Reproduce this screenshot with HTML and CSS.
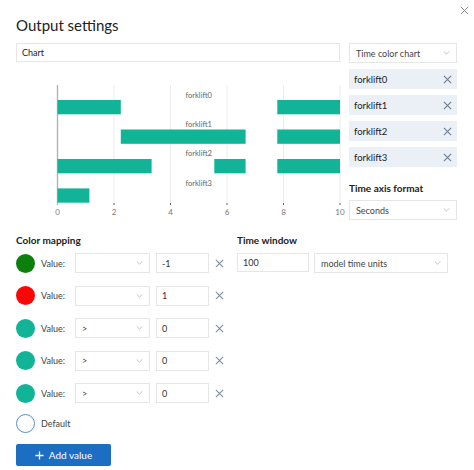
FILE: index.html
```html
<!DOCTYPE html>
<html>
<head>
<meta charset="utf-8">
<link rel="stylesheet" href="styles.css">
</head>
<body>
<div class="dialog">
  <span class="close"><svg viewBox="0 0 10 10" width="9" height="9"><path d="M1 1L9 9M9 1L1 9" stroke="#8a8a8a" stroke-width="1.1" fill="none"/></svg></span>
  <h1 class="title">Output settings</h1>
  <div class="top">
    <div class="main">
      <div class="field wide">Chart</div>
      <svg class="chart" viewBox="0 0 324 160" width="324" height="160">
        <g stroke="#ececec" stroke-width="1">
          <line x1="98" y1="23" x2="98" y2="143"/>
          <line x1="154.5" y1="23" x2="154.5" y2="143"/>
          <line x1="211" y1="23" x2="211" y2="143"/>
          <line x1="267.5" y1="23" x2="267.5" y2="143"/>
          <line x1="324" y1="23" x2="324" y2="143"/>
        </g>
        <g stroke="#666" stroke-width="1">
          <line x1="98" y1="141" x2="98" y2="143"/>
          <line x1="154.5" y1="141" x2="154.5" y2="143"/>
          <line x1="211" y1="141" x2="211" y2="143"/>
          <line x1="267.5" y1="141" x2="267.5" y2="143"/>
          <line x1="324" y1="141" x2="324" y2="143"/>
        </g>
        <line x1="41.5" y1="23" x2="41.5" y2="143" stroke="#b3b3b3" stroke-width="1.4"/>
        <g fill="#12b497">
          <rect x="41.5" y="38" width="63.3" height="14.3"/>
          <rect x="261.3" y="38" width="62.7" height="14.3"/>
          <rect x="104.8" y="67.5" width="124.8" height="14.3"/>
          <rect x="261.3" y="67.5" width="62.7" height="14.3"/>
          <rect x="41.5" y="97" width="94.1" height="14.3"/>
          <rect x="198.3" y="97" width="31.3" height="14.3"/>
          <rect x="261.3" y="97" width="62.7" height="14.3"/>
          <rect x="41.5" y="126.4" width="31.9" height="14.3"/>
        </g>
        <g class="lbl" text-anchor="middle">
          <text x="182.75" y="35.5">forklift0</text>
          <text x="182.75" y="64.5">forklift1</text>
          <text x="182.75" y="94">forklift2</text>
          <text x="182.75" y="123.5">forklift3</text>
        </g>
        <g class="tick" text-anchor="middle">
          <text x="41.5" y="153">0</text>
          <text x="98" y="153">2</text>
          <text x="154.5" y="153">4</text>
          <text x="211" y="153">6</text>
          <text x="267.5" y="153">8</text>
          <text x="324" y="153">10</text>
        </g>
      </svg>
    </div>
    <div class="side">
      <div class="select">Time color chart<svg class="chev" viewBox="0 0 8 5" width="7" height="4"><path d="M0.5 0.5L4 4L7.5 0.5" stroke="#aaa" fill="none" stroke-width="0.9"/></svg></div>
      <div class="chip">forklift0<svg class="x" viewBox="0 0 10 10" width="9" height="9"><path d="M1 1L9 9M9 1L1 9" stroke="#6f7f94" stroke-width="1.3" fill="none"/></svg></div>
      <div class="chip">forklift1<svg class="x" viewBox="0 0 10 10" width="9" height="9"><path d="M1 1L9 9M9 1L1 9" stroke="#6f7f94" stroke-width="1.3" fill="none"/></svg></div>
      <div class="chip">forklift2<svg class="x" viewBox="0 0 10 10" width="9" height="9"><path d="M1 1L9 9M9 1L1 9" stroke="#6f7f94" stroke-width="1.3" fill="none"/></svg></div>
      <div class="chip">forklift3<svg class="x" viewBox="0 0 10 10" width="9" height="9"><path d="M1 1L9 9M9 1L1 9" stroke="#6f7f94" stroke-width="1.3" fill="none"/></svg></div>
      <div class="label">Time axis format</div>
      <div class="select">Seconds<svg class="chev" viewBox="0 0 8 5" width="7" height="4"><path d="M0.5 0.5L4 4L7.5 0.5" stroke="#aaa" fill="none" stroke-width="0.9"/></svg></div>
    </div>
  </div>
  <div class="bottom">
    <div class="mapping">
      <div class="label">Color mapping</div>
      <div class="rows">
        <div class="row"><span class="dot green"></span><span class="row-label">Value:</span><div class="select op"><span></span><svg class="chev" viewBox="0 0 8 5" width="7" height="4"><path d="M0.5 0.5L4 4L7.5 0.5" stroke="#aaa" fill="none" stroke-width="0.9"/></svg></div><div class="field num">-1</div><svg class="remove" viewBox="0 0 10 10" width="9" height="9"><path d="M1 1L9 9M9 1L1 9" stroke="#7d8da2" stroke-width="1.2" fill="none"/></svg></div>
        <div class="row"><span class="dot red"></span><span class="row-label">Value:</span><div class="select op"><span></span><svg class="chev" viewBox="0 0 8 5" width="7" height="4"><path d="M0.5 0.5L4 4L7.5 0.5" stroke="#aaa" fill="none" stroke-width="0.9"/></svg></div><div class="field num">1</div><svg class="remove" viewBox="0 0 10 10" width="9" height="9"><path d="M1 1L9 9M9 1L1 9" stroke="#7d8da2" stroke-width="1.2" fill="none"/></svg></div>
        <div class="row"><span class="dot teal"></span><span class="row-label">Value:</span><div class="select op"><span>&gt;</span><svg class="chev" viewBox="0 0 8 5" width="7" height="4"><path d="M0.5 0.5L4 4L7.5 0.5" stroke="#aaa" fill="none" stroke-width="0.9"/></svg></div><div class="field num">0</div><svg class="remove" viewBox="0 0 10 10" width="9" height="9"><path d="M1 1L9 9M9 1L1 9" stroke="#7d8da2" stroke-width="1.2" fill="none"/></svg></div>
        <div class="row"><span class="dot teal"></span><span class="row-label">Value:</span><div class="select op"><span>&gt;</span><svg class="chev" viewBox="0 0 8 5" width="7" height="4"><path d="M0.5 0.5L4 4L7.5 0.5" stroke="#aaa" fill="none" stroke-width="0.9"/></svg></div><div class="field num">0</div><svg class="remove" viewBox="0 0 10 10" width="9" height="9"><path d="M1 1L9 9M9 1L1 9" stroke="#7d8da2" stroke-width="1.2" fill="none"/></svg></div>
        <div class="row"><span class="dot teal"></span><span class="row-label">Value:</span><div class="select op"><span>&gt;</span><svg class="chev" viewBox="0 0 8 5" width="7" height="4"><path d="M0.5 0.5L4 4L7.5 0.5" stroke="#aaa" fill="none" stroke-width="0.9"/></svg></div><div class="field num">0</div><svg class="remove" viewBox="0 0 10 10" width="9" height="9"><path d="M1 1L9 9M9 1L1 9" stroke="#7d8da2" stroke-width="1.2" fill="none"/></svg></div>
      </div>
      <div class="row default-row"><span class="dot empty"></span><span class="row-label">Default</span></div>
      <button class="add"><svg viewBox="0 0 10 10" width="9" height="9"><path d="M5 0.5V9.5M0.5 5H9.5" stroke="#fff" stroke-width="1.4" fill="none"/></svg>Add value</button>
    </div>
    <div class="window">
      <div class="label">Time window</div>
      <div class="tw-row">
        <div class="field tw-num">100</div>
        <div class="select tw-unit">model time units<svg class="chev" viewBox="0 0 8 5" width="7" height="4"><path d="M0.5 0.5L4 4L7.5 0.5" stroke="#aaa" fill="none" stroke-width="0.9"/></svg></div>
      </div>
    </div>
  </div>
</div>
</body>
</html>
```

FILE: styles.css
```css
* { box-sizing: border-box; }
body {
  margin: 0;
  font-family: Lato, "Open Sans", sans-serif;
  color: #333;
  background: #fff;
}
.dialog {
  position: relative;
  width: 474px;
  height: 470px;
  padding: 15px 17px 0 16px;
}
.close {
  position: absolute;
  top: 6px;
  right: 5px;
  display: flex;
}
.title {
  margin: 0;
  font-size: 15px;
  font-weight: 400;
  line-height: 20px;
  height: 20px;
  color: #222;
}
.top {
  display: grid;
  grid-template-columns: 324px 108px;
  column-gap: 9px;
  margin-top: 8px;
}
.field {
  height: 19px;
  border: 1px solid #e6e6e6;
  display: flex;
  align-items: center;
  padding: 0 5px;
  font-size: 9px;
  color: #333;
}
.wide { color: #222; }
.chart {
  display: block;
  overflow: visible;
}
.lbl text {
  font-size: 7.5px;
  fill: #666;
}
.tick text {
  font-size: 8px;
  fill: #777;
}
.side {
  display: flex;
  flex-direction: column;
}
.select {
  height: 20px;
  border: 1px solid #e6e6e6;
  display: flex;
  align-items: center;
  justify-content: space-between;
  padding: 0 6px;
  font-size: 9px;
  color: #444;
}
.chev { flex: none; }
.chip {
  height: 20px;
  margin-top: 6px;
  background: #ebf0f7;
  display: flex;
  align-items: center;
  justify-content: space-between;
  padding: 0 5px;
  font-size: 9.5px;
  color: #222;
}
.label {
  font-weight: 700;
  font-size: 10px;
  line-height: 12px;
  color: #222;
}
.side .label {
  margin-top: 15px;
  margin-bottom: 6px;
}
.bottom {
  display: grid;
  grid-template-columns: 221px 211px;
  margin-top: 12px;
}
.mapping .label { margin-bottom: 7px; }
.rows {
  display: flex;
  flex-direction: column;
  gap: 12.5px;
}
.row {
  display: flex;
  align-items: center;
  height: 20px;
}
.dot {
  width: 19px;
  height: 19px;
  border-radius: 50%;
  flex: none;
}
.green { background: #0c7f0c; }
.red { background: #fb0606; }
.teal { background: #12b497; }
.empty { background: #fff; border: 1px solid #5c8fc4; }
.row-label {
  width: 34px;
  margin-left: 6px;
  font-size: 9px;
  color: #444;
}
.op { width: 75px; }
.num {
  width: 53px;
  height: 20px;
  margin-left: 6px;
}
.remove { margin-left: 6px; flex: none; }
.default-row { margin-top: 10px; }
.add {
  margin-top: 11px;
  width: 95px;
  height: 22px;
  background: #1b6ec2;
  color: #fff;
  border: 0;
  border-radius: 2px;
  display: flex;
  align-items: center;
  justify-content: center;
  gap: 5px;
  font-family: inherit;
  font-size: 10px;
  padding: 0;
}
.window .label { margin-bottom: 7px; }
.tw-row {
  display: flex;
  gap: 5px;
}
.tw-num { width: 72px; }
.tw-unit { width: 134px; }
```
